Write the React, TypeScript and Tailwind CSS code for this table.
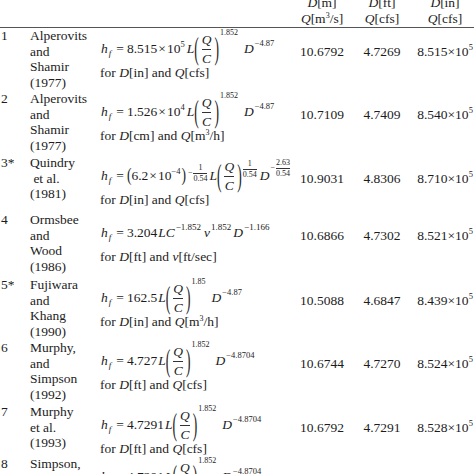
import React from "react";

type Row = {
  label: string;
  authors: string[];
  formula: React.ReactNode;
  note: React.ReactNode;
  nums?: [string, string, string];
  h: string;
};

function Sup({ children, className = "" }: { children: React.ReactNode; className?: string }) {
  return <span className={"text-[8.5px] leading-none relative -top-[6px] " + className}>{children}</span>;
}

function Hf() {
  return (
    <>
      <span className="italic ml-[1px]">h</span>
      <span className="italic text-[9px] leading-none relative top-[4px] ml-[1px]">f</span>
      <span className="ml-[5px] mr-[3px]">=</span>
    </>
  );
}

function Paren({ c }: { c: string }) {
  return <span className="inline-block scale-y-[2.4] leading-none">{c}</span>;
}

function QC() {
  return (
    <span className="inline-flex flex-col items-center leading-none italic px-[3px]">
      <span>Q</span>
      <span className="h-px w-full bg-[#333] my-[2px]" />
      <span>C</span>
    </span>
  );
}

function PowQC({ exp }: { exp: React.ReactNode }) {
  return (
    <>
      <Paren c="(" />
      <QC />
      <Paren c=")" />
      <span className="self-start text-[8px] leading-none ml-[1px] -mt-[4px]">{exp}</span>
    </>
  );
}

function SmallFrac({ a, b }: { a: string; b: string }) {
  return (
    <span className="inline-flex flex-col items-center text-[8px] leading-none">
      <span>{a}</span>
      <span className="h-px w-full bg-[#333] my-[1px]" />
      <span>{b}</span>
    </span>
  );
}

function Times10({ m, e }: { m: string; e: string }) {
  return (
    <span>
      {m}
      <span className="mx-[1px]">×</span>10<Sup>{e}</Sup>
    </span>
  );
}

function Note({ a, b, c }: { a: string; b: string; c: React.ReactNode }) {
  return (
    <div>
      for <i>D</i>[{a}] and <i>{b}</i>[{c}]
    </div>
  );
}

const m3h = (
  <>
    m<span className="text-[8px] leading-none relative -top-[5px]">3</span>/h
  </>
);

const stdTail = (exp: string, d: string) => (
  <>
    <PowQC exp={exp} />
    <span className="italic ml-[6px]">D</span>
    <Sup className="ml-[1px]">{d}</Sup>
  </>
);

const rows: Row[] = [
  {
    label: "1",
    authors: ["Alperovits", "and", "Shamir", "(1977)"],
    formula: (
      <>
        <Hf />
        <Times10 m="8.515" e="5" />
        <span className="italic ml-[2px]">L</span>
        {stdTail("1.852", "−4.87")}
      </>
    ),
    note: <Note a="in" b="Q" c="cfs" />,
    nums: ["10.6792", "4.7269", "8.515"],
    h: "h-[63px]",
  },
  {
    label: "2",
    authors: ["Alperovits", "and", "Shamir", "(1977)"],
    formula: (
      <>
        <Hf />
        <Times10 m="1.526" e="4" />
        <span className="italic ml-[2px]">L</span>
        {stdTail("1.852", "−4.87")}
      </>
    ),
    note: <Note a="cm" b="Q" c={m3h} />,
    nums: ["10.7109", "4.7409", "8.540"],
    h: "h-[64px]",
  },
  {
    label: "3*",
    authors: ["Quindry", "\u00a0et al.", "(1981)"],
    formula: (
      <>
        <Hf />
        <span className="inline-block scale-y-[1.35]">(</span>
        <Times10 m="6.2" e="−4" />
        <span className="inline-block scale-y-[1.35] ml-[1px]">)</span>
        <span className="inline-flex items-center relative -top-[3px] ml-[2px]">
          <span className="text-[8px] mr-[1px]">−</span>
          <SmallFrac a="1" b="0.54" />
        </span>
        <span className="italic ml-[2px]">L</span>
        <Paren c="(" />
        <QC />
        <Paren c=")" />
        <span className="self-start -mt-[6px] ml-[1px]">
          <SmallFrac a="1" b="0.54" />
        </span>
        <span className="italic ml-[3px]">D</span>
        <span className="inline-flex items-center relative -top-[8px] ml-[1px]">
          <span className="text-[8px] mr-[1px]">−</span>
          <SmallFrac a="2.63" b="0.54" />
        </span>
      </>
    ),
    note: <Note a="in" b="Q" c="cfs" />,
    nums: ["10.9031", "4.8306", "8.710"],
    h: "h-[57px]",
  },
  {
    label: "4",
    authors: ["Ormsbee", "and", "Wood", "(1986)"],
    formula: (
      <>
        <Hf />
        <span>3.204</span>
        <span className="italic ml-[1px]">LC</span>
        <Sup className="text-[9px] ml-[1px]">−1.852</Sup>
        <span className="italic ml-[3px]">v</span>
        <Sup className="text-[9px] ml-[1px]">1.852</Sup>
        <span className="italic ml-[2px]">D</span>
        <Sup className="text-[9px] ml-[1px]">−1.166</Sup>
      </>
    ),
    note: <Note a="ft" b="v" c="ft/sec" />,
    nums: ["10.6866", "4.7302", "8.521"],
    h: "h-[65px]",
  },
  {
    label: "5*",
    authors: ["Fujiwara", "and", "Khang", "(1990)"],
    formula: (
      <>
        <Hf />
        <span>162.5</span>
        <span className="italic ml-[1px]">L</span>
        {stdTail("1.85", "−4.87")}
      </>
    ),
    note: <Note a="in" b="Q" c={m3h} />,
    nums: ["10.5088", "4.6847", "8.439"],
    h: "h-[63px]",
  },
  {
    label: "6",
    authors: ["Murphy,", "and", "Simpson", "(1992)"],
    formula: (
      <>
        <Hf />
        <span>4.727</span>
        <span className="italic ml-[1px]">L</span>
        {stdTail("1.852", "−4.8704")}
      </>
    ),
    note: <Note a="ft" b="Q" c="cfs" />,
    nums: ["10.6744", "4.7270", "8.524"],
    h: "h-[64px]",
  },
  {
    label: "7",
    authors: ["Murphy", "et al.", "(1993)"],
    formula: (
      <>
        <Hf />
        <span>4.7291</span>
        <span className="italic ml-[1px]">L</span>
        {stdTail("1.852", "−4.8704")}
      </>
    ),
    note: <Note a="ft" b="Q" c="cfs" />,
    nums: ["10.6792", "4.7291", "8.528"],
    h: "h-[52px]",
  },
  {
    label: "8",
    authors: ["Simpson,", "and", "Elhay", "(2011)"],
    formula: (
      <>
        <Hf />
        <span>4.7291</span>
        <span className="italic ml-[1px]">L</span>
        {stdTail("1.852", "−4.8704")}
      </>
    ),
    note: <Note a="ft" b="Q" c="cfs" />,
    h: "h-[64px]",
  },
];

export default function App() {
  return (
    <div className="w-[474px] h-[474px] overflow-hidden bg-white text-[#1c1c1c] font-['Liberation_Serif','Times_New_Roman',serif] text-[13.5px] leading-[15.5px]">
      <div className="flex -mt-[5px] h-[32px] leading-[16px]">
        <div className="w-[296px]" />
        <div className="w-[52px] text-center whitespace-nowrap">
          <div>
            <i>D</i>[m]
          </div>
          <div>
            <i>Q</i>[m<span className="text-[8px] leading-none relative -top-[5px]">3</span>/s]
          </div>
        </div>
        <div className="w-[68px] text-center whitespace-nowrap">
          <div>
            <i>D</i>[ft]
          </div>
          <div>
            <i>Q</i>[cfs]
          </div>
        </div>
        <div className="w-[58px] text-center whitespace-nowrap">
          <div>
            <i>D</i>[in]
          </div>
          <div>
            <i>Q</i>[cfs]
          </div>
        </div>
      </div>
      <div className="h-px bg-[#555]" />

      {rows.map((r, i) => (
        <div key={i} className={"flex " + r.h}>
          <div className="w-[30px] pl-[1px]">{r.label}</div>
          <div className="w-[70px] whitespace-nowrap">
            {r.authors.map((a, j) => (
              <div key={j}>{a}</div>
            ))}
          </div>
          <div className="w-[196px]">
            <div className="flex items-center h-[32px] mt-[5px] whitespace-nowrap">{r.formula}</div>
            <div className="whitespace-nowrap">{r.note}</div>
          </div>
          {r.nums && (
            <>
              <div className="w-[52px] text-center pt-[16px]">{r.nums[0]}</div>
              <div className="w-[68px] text-center pt-[16px]">{r.nums[1]}</div>
              <div className="w-[58px] text-center pt-[16px] whitespace-nowrap">
                {r.nums[2]}×10<span className="text-[8.5px] leading-none relative -top-[6px]">5</span>
              </div>
            </>
          )}
        </div>
      ))}
    </div>
  );
}
